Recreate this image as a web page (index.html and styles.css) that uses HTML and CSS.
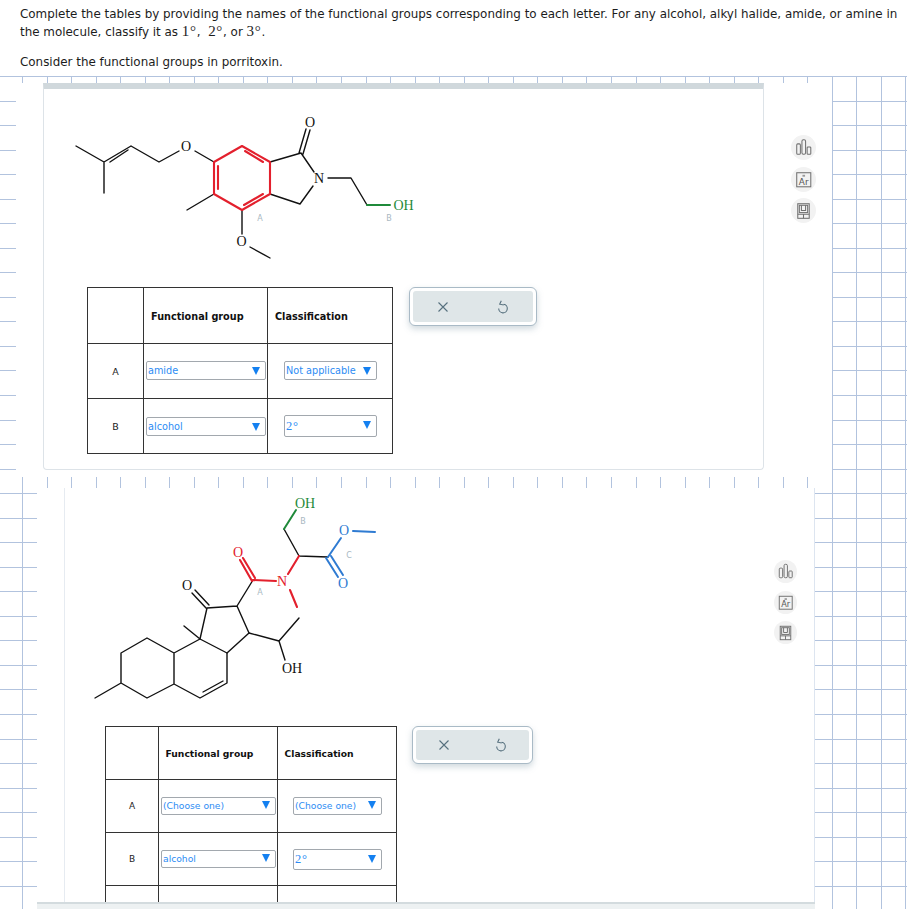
FILE: index.html
```html
<!DOCTYPE html>
<html lang="en">
<head>
<meta charset="utf-8">
<title>Functional groups</title>
<link rel="stylesheet" href="styles.css">
</head>
<body>
<svg class="defs" width="0" height="0" aria-hidden="true">
  <symbol id="i-bars" viewBox="0 0 24 24">
    <rect x="5.5" y="8.5" width="3.5" height="10" rx="1"/>
    <rect x="10.500" y="4.5" width="3.5" height="14" rx="1.400"/>
    <rect x="15.500" y="11.5" width="3.5" height="7" rx=".8"/>
  </symbol>
  <symbol id="i-book" viewBox="0 0 24 24">
    <rect x="6.5" y="5.5" width="11" height="14"/>
    <rect x="8" y="7" width="8" height="7"/>
    <path d="M10 7v5h4V7M6.500 15.500h11M12 15.500v4"/>
  </symbol>
  <symbol id="i-x" viewBox="0 0 14 14">
    <path d="M2.5 2.5l9 9M11.500 2.500l-9 9"/>
  </symbol>
  <symbol id="i-undo" viewBox="0 0 14 14">
    <path d="M7.700 4.300a4.300 4.300 0 1 1-5 4.200M5.300 .7L3.700 4.200l4 .8"/>
  </symbol>
</svg>

<div class="prompt">
  <p>Complete the tables by providing the names of the functional groups corresponding to each letter. For any alcohol, alkyl halide, amide, or amine in the molecule, classify it as <span class="math">1°</span>,&nbsp; <span class="math">2°</span>, or <span class="math">3°</span>.</p>
  <p>Consider the functional groups in porritoxin.</p>
</div>

<main class="sheet">
  <section class="panel panel-one">
    <div class="card">
      <svg class="mol mol-one" viewBox="44 89 400 198" width="400" height="198" role="img" aria-label="Porritoxin structure">
        <g class="bk">
          <path d="M76 146L104 162L104 193M104 162L131 146M110 162L128 150M131 146L159 162L179 151M195 151L214 162"/>
          <path d="M270 162L301 153M299 153L306 129M303 154L310 130M301 153L314 172M270 194L300 204L313 186M328 178H351L367 205"/>
          <path d="M214 194L187 210M242 210V234M250 247L270 258"/>
        </g>
        <g class="rd">
          <path d="M242 146L270 162V194L242 210L214 194V162ZM245 151L263 162M218 166V189M244 205L263 194"/>
        </g>
        <path class="gn" d="M367 205H390"/>
        <text x="186" y="150.500" class="at">O</text>
        <text x="310" y="126.500" class="at">O</text>
        <text x="319" y="182.500" class="at">N</text>
        <text x="241.500" y="245.500" class="at">O</text>
        <text x="403.500" y="210" class="at t-gn">OH</text>
        <text x="260" y="221" class="lbl">A</text>
        <text x="389" y="221" class="lbl">B</text>
      </svg>
      <div class="work">
        <table class="grid grid-one">
          <colgroup><col class="c1"><col class="c2"><col class="c3"></colgroup>
          <tr class="head"><th></th><th>Functional group</th><th>Classification</th></tr>
          <tr>
            <td class="key">A</td>
            <td><div class="pick p-fn"><span>amide</span><i></i></div></td>
            <td><div class="pick p-cl"><span>Not applicable</span><i></i></div></td>
          </tr>
          <tr>
            <td class="key">B</td>
            <td><div class="pick p-fn"><span>alcohol</span><i></i></div></td>
            <td><div class="pick p-cl tall"><span class="math">2°</span><i></i></div></td>
          </tr>
        </table>
        <div class="actions"><div class="actions-in">
          <svg class="act" width="14" height="14"><use href="#i-x"/></svg>
          <svg class="act" width="14" height="14"><use href="#i-undo"/></svg>
        </div></div>
      </div>
    </div>
    <div class="rail">
      <span class="tool"><svg width="25" height="25"><use href="#i-bars"/></svg></span>
      <span class="tool"><svg class="ico" width="25" height="25" viewBox="0 0 24 24"><rect x="5.5" y="5.5" width="13.5" height="13.5"/><rect class="fill" x="11" y="7.500" width="2.500" height="1.800"/><text x="12.200" y="16.900" class="ar">Ar</text></svg></span>
      <span class="tool"><svg width="25" height="25"><use href="#i-book"/></svg></span>
    </div>
  </section>

  <section class="panel panel-two">
    <div class="scroll">
      <div class="card-two">
        <svg class="mol mol-two" viewBox="65 488 340 238" width="340" height="238" role="img" aria-label="Second molecule">
          <g class="bk">
            <path d="M284 529L299 556L328 557"/>
            <path d="M253 580L237 606L207 608M206 608L192 593M209 605L195 590M207 608L200 639L184 626M237 606L249 633L227 653L200 639"/>
            <path d="M249 633L279 641L299 618M279 641L285 660"/>
            <path d="M227 653V683L200 698L174 684V653L200 639M223 681L203 692M174 653L147 638L121 653V683L147 698L174 684M121 683L95 698"/>
          </g>
          <g class="rd"><path d="M299 556L288 574M290 590L297 607M276 581L253 580M252 581L240 560M255 578L243 558"/></g>
          <path class="gn" d="M296 510L284 529"/>
          <path class="bl" d="M328 557L341 538M353 531L375 532M326 558L338 577M331 556L343 575"/>
          <text x="305" y="507.500" class="at t-gn">OH</text>
          <text x="344" y="535" class="at t-bl">O</text>
          <text x="343" y="587.500" class="at t-bl">O</text>
          <text x="238" y="556.500" class="at t-rd">O</text>
          <text x="282" y="585.500" class="at t-rd">N</text>
          <text x="187" y="589.500" class="at">O</text>
          <text x="292" y="673" class="at">OH</text>
          <text x="303" y="524" class="lbl">B</text>
          <text x="349" y="558" class="lbl">C</text>
          <text x="260" y="595" class="lbl">A</text>
        </svg>
        <div class="work work-two">
          <table class="grid grid-two">
            <colgroup><col class="c1"><col class="c2"><col class="c3"></colgroup>
            <tr class="head"><th></th><th>Functional group</th><th>Classification</th></tr>
            <tr>
              <td class="key">A</td>
              <td><div class="pick p-fn"><span>(Choose one)</span><i></i></div></td>
              <td><div class="pick p-cl"><span>(Choose one)</span><i></i></div></td>
            </tr>
            <tr>
              <td class="key">B</td>
              <td><div class="pick p-fn"><span>alcohol</span><i></i></div></td>
              <td><div class="pick p-cl tall"><span class="math">2°</span><i></i></div></td>
            </tr>
            <tr>
              <td class="key"></td>
              <td><div class="pick p-fn"></div></td>
              <td><div class="pick p-cl"></div></td>
            </tr>
          </table>
          <div class="actions"><div class="actions-in">
            <svg class="act" width="14" height="14"><use href="#i-x"/></svg>
            <svg class="act" width="14" height="14"><use href="#i-undo"/></svg>
          </div></div>
        </div>
      </div>
      <div class="rail">
        <span class="tool"><svg width="23" height="23"><use href="#i-bars"/></svg></span>
        <span class="tool"><svg class="ico" width="23" height="23" viewBox="0 0 24 24"><rect x="5.5" y="5.5" width="13.5" height="13.5"/><rect class="fill" x="11" y="7.500" width="2.500" height="1.800"/><text x="12.200" y="16.900" class="ar">Ar</text></svg></span>
        <span class="tool"><svg width="23" height="23"><use href="#i-book"/></svg></span>
      </div>
    </div>
    <div class="foot"></div>
  </section>
</main>
</body>
</html>
```
FILE: styles.css
```css
* { box-sizing: border-box; }
html, body { margin: 0; padding: 0; height: 909px; overflow: hidden; background: #fff; }
body { font-family: "DejaVu Sans", Verdana, sans-serif; color: #1c1c1c; }
.defs { position: absolute; }
symbol rect, symbol path, .ico rect { fill: none; stroke: #707070; stroke-width: 1; }
.ico rect.fill { fill: #999; stroke: none; }
.ico text.ar { font: 400 8.500px "DejaVu Sans", sans-serif; fill: #555; text-anchor: middle; }
#i-x path, #i-undo path { stroke: #56707e; stroke-width: 1.1; fill: none; }

.prompt { height: 76px; padding: 5px 0 0 20px; font-size: 11.920px; line-height: 18px; }
.prompt p { margin: 0 0 12px; width: 882px; }
.math { font-family: "Liberation Serif", "Times New Roman", serif; font-size: 15px; line-height: 1; letter-spacing: .7px; }

.sheet {
  height: 833px;
  padding-top: 7px;
  overflow: hidden;
  background-image:
    repeating-linear-gradient(90deg, transparent 0, transparent 22px, #b2c3de 22px, #b2c3de 23px, transparent 23px, transparent 24.54px),
    repeating-linear-gradient(180deg, #b2c3de 0, #b2c3de 1px, transparent 1px, transparent 24.54px);
}
.panel { background: #fff; }
.panel-one { display: flex; align-items: flex-start; width: 816px; height: 394px; margin: 0 0 11px 16px; padding-left: 27px; }
.card { width: 721px; height: 387px; background: #fff; border: 1px solid #dde3e8; border-top: 6px solid #d0d8dc; border-radius: 0 0 4px 4px; }
.mol { display: block; }
.mol path { fill: none; stroke-linecap: round; stroke-linejoin: round; }
.bk path { stroke: #111; stroke-width: 1.4; }
.rd path { stroke: #e3202d; stroke-width: 2.100; }
.gn { stroke: #1f8a3a; stroke-width: 2; }
.bl { stroke: #2f7bd2; stroke-width: 2; }
.at { font: 14px "Liberation Serif", serif; fill: #111; text-anchor: middle; }
.t-gn { fill: #1f8a3a; }
.t-bl { fill: #2f7bd2; }
.t-rd { fill: #e3202d; }
.lbl { font: 8px "DejaVu Sans", sans-serif; fill: #a9b8c2; text-anchor: middle; }

.work { display: flex; align-items: flex-start; gap: 16px; padding-left: 43px; }
.grid { table-layout: fixed; border-collapse: collapse; border: 1px solid #222; }
.grid th, .grid td { border: 1px solid #333; padding: 0; }
.grid th { text-align: left; font-weight: 700; color: #111; }
.key { text-align: center; color: #222; }
.pick { display: flex; justify-content: space-between; align-items: center; margin: -1px auto 0; background: #fff; border: 1px solid #a2a8ae; border-radius: 2px; color: #2c8cf4; white-space: nowrap; padding: 0 5px 0 1.500px; }
.pick i { flex: none; width: 0; height: 0; border-left: 4.500px solid transparent; border-right: 4.500px solid transparent; border-top: 8px solid #1480f0; }
.pick .math { font-size: 12.500px; }
.pick.tall { margin-top: 0; }
.pick.tall i { align-self: flex-start; margin-top: 5px; }

.grid-one { width: 305px; }
.grid-one .c1 { width: 56px; }
.grid-one .c2 { width: 124px; }
.grid-one .c3 { width: 125px; }
.grid-one tr { height: 55px; }
.grid-one .head { height: 56px; }
.grid-one th { font-size: 9.700px; padding: 1px 0 0 7px; }
.grid-one .key { font-size: 9.500px; }
.grid-one .pick { font-size: 9.700px; height: 19px; }
.grid-one tr:last-child .p-fn { margin-top: 1px; }
.grid-one .p-fn { width: 120px; }
.grid-one .p-cl { width: 93px; }
.grid-one .tall { height: 22px; }

.actions { border: 1px solid #a9bac6; border-radius: 6px; background: #fff; padding: 3px; box-shadow: 0 3px 6px rgba(120,145,160,.35); }
.actions-in { display: flex; justify-content: space-around; align-items: center; background: #dfe6e8; border-radius: 3px; }
.act { display: block; }
.grid-one + .actions { width: 128px; height: 39px; }
.grid-one + .actions .actions-in { height: 31px; }

.rail { display: flex; flex-direction: column; gap: 6.500px; margin-top: 52px; margin-left: 27px; }
.tool { display: block; width: 25px; height: 25px; border-radius: 50%; background: #f2f2f2; }
.tool svg { display: block; }

.panel-two { width: 778px; margin-left: 37px; height: 421px; }
.scroll { display: flex; align-items: flex-start; height: 414px; overflow: hidden; padding-left: 27px; border-right: 1px solid #dde5f0; }
.card-two { width: 711px; height: 414px; border-left: 1px solid #e6ebf1; }
.work-two { padding-left: 40px; gap: 15px; }
.grid-two { width: 291px; }
.grid-two .c1 { width: 53px; }
.grid-two .c2 { width: 119px; }
.grid-two .c3 { width: 119px; }
.grid-two tr { height: 53px; }
.grid-two th { font-size: 9.200px; padding-left: 6.500px; }
.grid-two .key { font-size: 9px; }
.grid-two .pick { font-size: 9.200px; height: 18px; margin-top: 0; padding-bottom: 2px; }
.grid-two .pick.tall { padding-bottom: 0; }
.grid-two .p-fn { width: 115px; }
.grid-two .p-cl { width: 89px; }
.grid-two .tall { height: 21px; }
.grid-two + .actions { width: 121px; height: 38px; }
.grid-two + .actions .actions-in { height: 30px; }
.scroll .rail { margin: 72px 0 0 -1px; gap: 7.500px; }
.scroll .tool { width: 23px; height: 23px; }
.foot { height: 7px; background: linear-gradient(#d3dbde 0, #d3dbde 2px, #edf1f2 2px); }
```
